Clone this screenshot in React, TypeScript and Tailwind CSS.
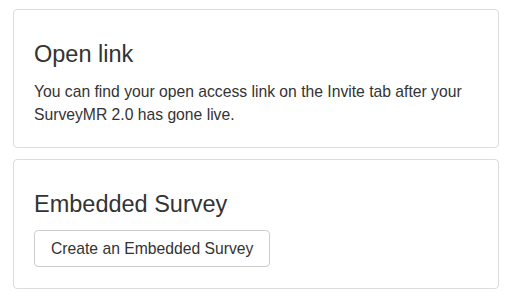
import React from "react";

export default function App() {
  return (
    <div
      className="w-[512px] h-[302px] bg-white pt-[9px] px-[13px] text-[#333]"
      style={{ fontFamily: '"Liberation Sans", Arial, sans-serif' }}
    >
      <div className="flex flex-col gap-[11px]">
        <div className="border border-[#dddddd] rounded-[4px] px-5 pt-5 pb-[21px]">
          <h3 className="mt-[11px] text-[23.5px] leading-[26px] font-normal">Open link</h3>
          <p className="mt-[13px] text-[15.7px] leading-[23px]">
            You can find your open access link on the Invite tab after your SurveyMR 2.0 has gone live.
          </p>
        </div>
        <div className="border border-[#dddddd] rounded-[4px] px-5 pt-5 pb-[21px]">
          <h3 className="mt-[11px] text-[23.5px] leading-[26px] font-normal">Embedded Survey</h3>
          <div className="mt-[13px] flex">
            <button className="h-[37px] px-4 border border-[#cccccc] rounded-[4px] bg-white text-[15.7px] text-[#333]">
              Create an Embedded Survey
            </button>
          </div>
        </div>
      </div>
    </div>
  );
}
